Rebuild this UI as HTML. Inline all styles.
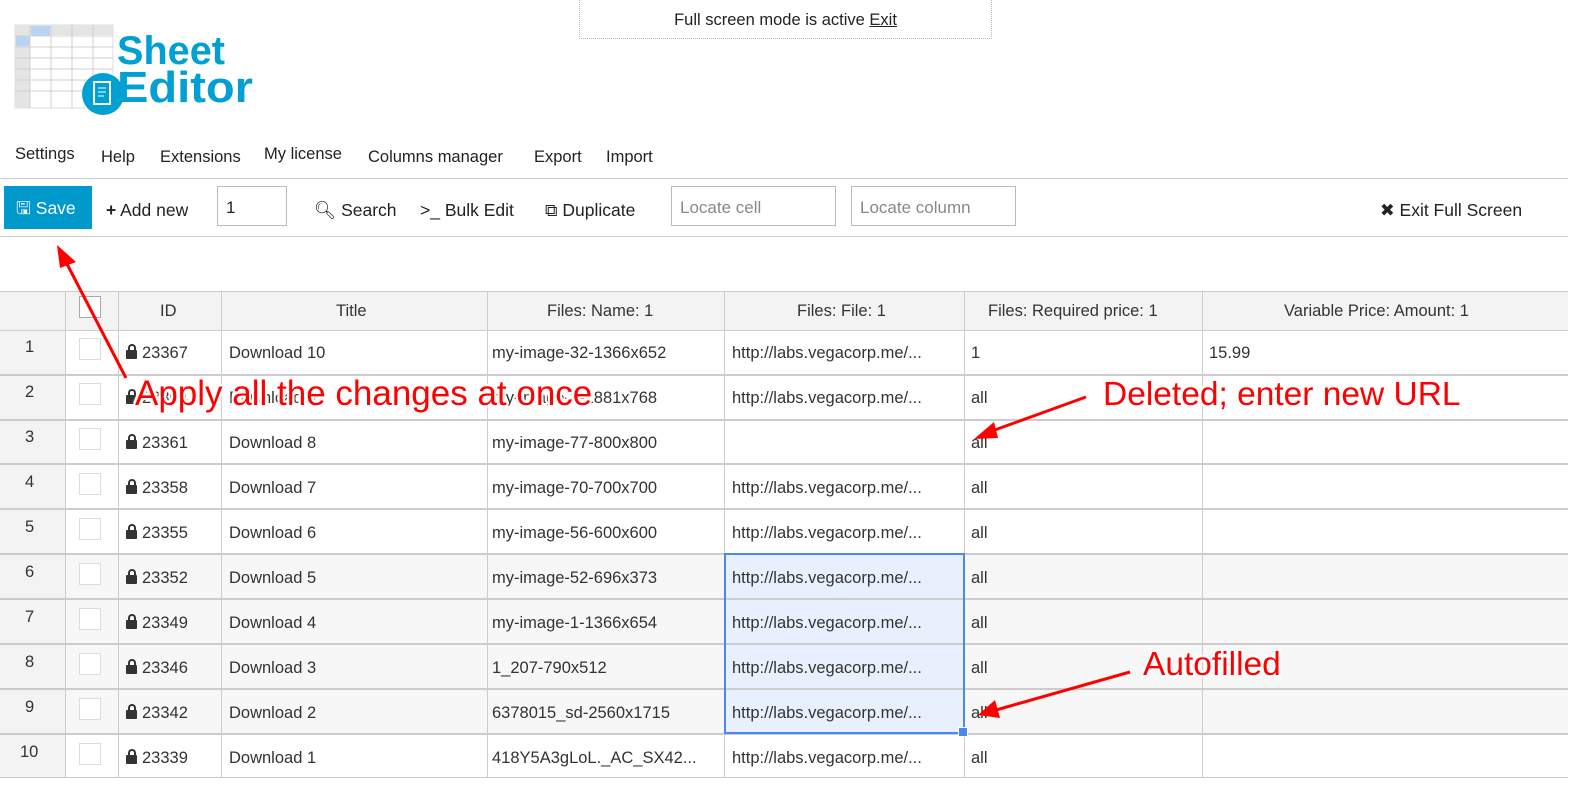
<!DOCTYPE html>
<html><head><meta charset="utf-8"><style>
body{margin:0;width:1572px;height:790px;position:relative;background:#fff;font-family:"Liberation Sans",sans-serif;color:#333;overflow:hidden}
.a{position:absolute;white-space:nowrap}
.menu{font-size:16.5px;color:#222}
.tb{font-size:17.5px;color:#222}
.inp{position:absolute;border:1px solid #bbb;height:40px;background:#fff;font-size:17px;color:#888;box-sizing:border-box;padding:11px 8px}
.hl{position:absolute;left:0;width:1568px;background:#ccc}
.vl{position:absolute;width:1px;background:#ccc}
.c{position:absolute;font-size:16.5px;color:#333;white-space:nowrap}
.cb{position:absolute;left:79px;width:22px;height:22px;border:1px solid #ddd;background:#fff;box-sizing:border-box}
.lk{display:inline-block;width:11px;height:9px;background:#333;border-radius:1px;position:relative;margin-right:5px;vertical-align:-1px}
.lk:before{content:"";position:absolute;left:2px;top:-6px;width:4px;height:6px;border:2px solid #333;border-bottom:0;border-radius:4px 4px 0 0}
.red{position:absolute;color:#f00;font-family:"Liberation Sans",sans-serif;white-space:nowrap;text-shadow:2px 0 #fff,-2px 0 #fff,0 2px #fff,0 -2px #fff,2px 2px #fff,-2px -2px #fff,2px -2px #fff,-2px 2px #fff,0 0 4px #fff}
</style></head><body>
<div class="a" style="left:579px;top:0;width:411px;height:38px;border:1px dotted #bbb;border-top:0;text-align:center;font-size:16.5px;line-height:40px;color:#222">Full screen mode is active <u>Exit</u></div>
<svg class="a" style="left:14px;top:24px" width="250" height="92">
<rect x="1" y="1" width="98" height="83" fill="#fff" stroke="#ddd"/>
<rect x="1" y="1" width="98" height="10" fill="#e4e4e4"/><rect x="1" y="1" width="15" height="83" fill="#e4e4e4"/>
<rect x="17" y="2" width="19" height="10" fill="#b8d4f5"/><rect x="2" y="12" width="14" height="10" fill="#b8d4f5"/>
<g stroke="#d0d0d0"><line x1="16" y1="1" x2="16" y2="84"/><line x1="37" y1="1" x2="37" y2="84"/><line x1="58" y1="1" x2="58" y2="84"/><line x1="79" y1="1" x2="79" y2="84"/>
<line x1="1" y1="12" x2="99" y2="12"/><line x1="1" y1="23" x2="99" y2="23"/><line x1="1" y1="34" x2="99" y2="34"/><line x1="1" y1="45" x2="99" y2="45"/><line x1="1" y1="56" x2="99" y2="56"/><line x1="1" y1="67" x2="99" y2="67"/></g>
<circle cx="89" cy="70" r="21" fill="#00a0d2"/>
<rect x="80" y="58" width="16" height="22" fill="none" stroke="#fff" stroke-width="2"/>
<line x1="84" y1="64" x2="92" y2="64" stroke="#fff"/><line x1="84" y1="68" x2="92" y2="68" stroke="#fff"/><line x1="84" y1="72" x2="90" y2="72" stroke="#fff"/>
<text x="103" y="40" font-family="Liberation Sans" font-weight="bold" font-size="40" fill="#00a0d2" textLength="108" lengthAdjust="spacingAndGlyphs">Sheet</text>
<text x="103" y="78" font-family="Liberation Sans" font-weight="bold" font-size="44" fill="#00a0d2" textLength="136" lengthAdjust="spacingAndGlyphs">Editor</text>
</svg>
<div class="a menu" style="left:15px;top:145px">Settings</div>
<div class="a menu" style="left:101px;top:148px">Help</div>
<div class="a menu" style="left:160px;top:148px">Extensions</div>
<div class="a menu" style="left:264px;top:145px">My license</div>
<div class="a menu" style="left:368px;top:148px">Columns manager</div>
<div class="a menu" style="left:534px;top:148px">Export</div>
<div class="a menu" style="left:606px;top:148px">Import</div>
<div class="a" style="left:0;top:178px;width:1568px;height:1px;background:#ccc"></div>
<div class="a" style="left:0;top:236px;width:1568px;height:1px;background:#ccc"></div>
<div class="a" style="left:4px;top:186px;width:88px;height:43px;background:#0099cc;color:#fff;font-size:17.5px;line-height:45px;text-indent:12px">&#128427;&#xFE0E; Save</div>
<div class="a tb" style="left:106px;top:200px"><b>+</b> Add new</div>
<div class="inp" style="left:217px;top:186px;width:70px;color:#222">1</div>
<div class="a tb" style="left:314px;top:200px">&#x1F50D;&#xFE0E; Search</div>
<div class="a tb" style="left:420px;top:200px">&gt;_ Bulk Edit</div>
<div class="a tb" style="left:545px;top:200px">&#x29C9; Duplicate</div>
<div class="inp" style="left:671px;top:186px;width:165px">Locate cell</div>
<div class="inp" style="left:851px;top:186px;width:165px">Locate column</div>
<div class="a tb" style="left:1380px;top:200px">&#x2716; Exit Full Screen</div>
<div class="a" style="left:0;top:292px;width:1568px;height:38px;background:#f3f3f3"></div>
<div class="a" style="left:0;top:292px;width:65px;height:486px;background:#f3f3f3"></div>
<div class="a" style="left:65px;top:555px;width:1503px;height:178px;background:#f7f7f7"></div>
<div class="a" style="left:725px;top:555px;width:238px;height:177px;background:#e8f0fe"></div>
<div class="hl" style="top:291px;height:1px"></div>
<div class="hl" style="top:330px;height:1px"></div>
<div class="hl" style="top:374px;height:2px"></div>
<div class="hl" style="top:419px;height:2px"></div>
<div class="hl" style="top:463px;height:2px"></div>
<div class="hl" style="top:508px;height:2px"></div>
<div class="hl" style="top:553px;height:2px"></div>
<div class="hl" style="top:598px;height:2px"></div>
<div class="hl" style="top:643px;height:2px"></div>
<div class="hl" style="top:688px;height:2px"></div>
<div class="hl" style="top:733px;height:2px"></div>
<div class="hl" style="top:777px;height:1px"></div>
<div class="vl" style="left:65px;top:292px;height:486px"></div>
<div class="vl" style="left:118px;top:292px;height:486px"></div>
<div class="vl" style="left:221px;top:292px;height:486px"></div>
<div class="vl" style="left:487px;top:292px;height:486px"></div>
<div class="vl" style="left:724px;top:292px;height:486px"></div>
<div class="vl" style="left:964px;top:292px;height:486px"></div>
<div class="vl" style="left:1202px;top:292px;height:486px"></div>
<div class="a" style="left:724px;top:553px;width:237px;height:177px;border:2px solid #4a89e8"></div>
<div class="a" style="left:958px;top:727px;width:8px;height:8px;background:#4a89e8;border:1px solid #fff"></div>
<div class="cb" style="top:296px;border-color:#aaa"></div>
<div class="c" style="left:160px;top:302px">ID</div>
<div class="c" style="left:336px;top:302px">Title</div>
<div class="c" style="left:547px;top:302px">Files: Name: 1</div>
<div class="c" style="left:797px;top:302px">Files: File: 1</div>
<div class="c" style="left:988px;top:302px">Files: Required price: 1</div>
<div class="c" style="left:1284px;top:302px">Variable Price: Amount: 1</div>
<div id="rows"></div>
<script>
var d=[["23367","Download 10","my-image-32-1366x652",1,"1","15.99"],["23364","Download 9","my-image-3-1881x768",1,"all",""],["23361","Download 8","my-image-77-800x800",0,"all",""],["23358","Download 7","my-image-70-700x700",1,"all",""],["23355","Download 6","my-image-56-600x600",1,"all",""],["23352","Download 5","my-image-52-696x373",1,"all",""],["23349","Download 4","my-image-1-1366x654",1,"all",""],["23346","Download 3","1_207-790x512",1,"all",""],["23342","Download 2","6378015_sd-2560x1715",1,"all",""],["23339","Download 1","418Y5A3gLoL._AC_SX42...",1,"all",""]];
var h="";d.forEach(function(r,i){var t=331+i*45;var y=t+13;
h+='<div class="c" style="left:'+(i==9?20:25)+'px;top:'+(t+7)+'px">'+(i+1)+'</div><div class="cb" style="top:'+(t+7)+'px"></div>';
h+='<div class="c" style="left:126px;top:'+y+'px"><span class="lk"></span>'+r[0]+'</div><div class="c" style="left:229px;top:'+y+'px">'+r[1]+'</div><div class="c" style="left:492px;top:'+y+'px">'+r[2]+'</div>';
if(r[3])h+='<div class="c" style="left:732px;top:'+y+'px">http://labs.vegacorp.me/...</div>';
h+='<div class="c" style="left:971px;top:'+y+'px">'+r[4]+'</div><div class="c" style="left:1209px;top:'+y+'px">'+r[5]+'</div>';});
document.getElementById("rows").innerHTML=h;
</script>
<svg class="a" style="left:0;top:0" width="1572" height="790">
<g stroke="#f00" stroke-width="3" fill="#f00">
<line x1="126" y1="378" x2="66" y2="262"/><polygon points="57,245 76,262 60,268" stroke="none"/>
<line x1="1086" y1="397" x2="992" y2="431"/><polygon points="974,439 994,422 998,438" stroke="none"/>
<line x1="1130" y1="672" x2="996" y2="710"/><polygon points="978,715 995,700 1000,718" stroke="none"/>
</g></svg>
<div class="red" style="left:135px;top:374px;font-size:35px">Apply all the changes at once</div>
<div class="red" style="left:1103px;top:376px;font-size:33.5px">Deleted; enter new URL</div>
<div class="red" style="left:1143px;top:646px;font-size:33.5px">Autofilled</div>
</body></html>
